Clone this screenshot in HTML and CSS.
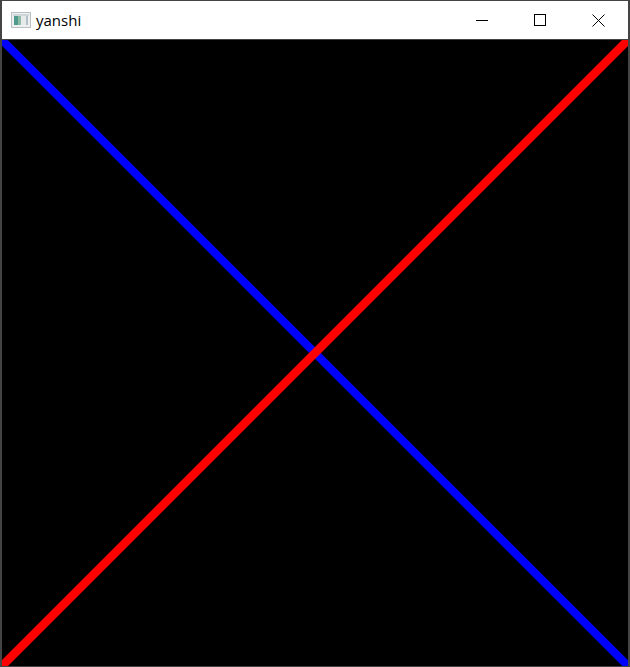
FILE: index.html
```html
<!DOCTYPE html>
<html lang="en">
<head>
    <meta charset="UTF-8">
    <title>yanshi</title>
    <link rel="stylesheet" href="styles.css">
</head>
<body>
    <div class="window">
        <!-- Title bar -->
        <header class="titlebar">
            <svg class="app-icon" width="20" height="16" viewBox="0 0 20 16">
                <rect x="0.5" y="0.5" width="19" height="15" fill="#eef0f0" stroke="#b9bfc2"/>
                <rect x="2" y="2" width="16" height="2" fill="#cfd6da"/>
                <rect x="3" y="4" width="4" height="9" fill="#4f9a8c"/>
                <rect x="7" y="4" width="3" height="9" fill="#8dbda6"/>
                <rect x="10" y="4" width="5" height="9" fill="#e6ebea"/>
                <rect x="15" y="4" width="2" height="9" fill="#b3bfca"/>
            </svg>
            <span class="title">yanshi</span>
            <div class="controls">
                <div class="control">
                    <svg width="12" height="12" viewBox="0 0 12 12"><path d="M0 6.5H12" stroke="#000" fill="none"/></svg>
                </div>
                <div class="control">
                    <svg width="12" height="12" viewBox="0 0 12 12"><rect x="0.5" y="0.5" width="11" height="11" stroke="#000" fill="none"/></svg>
                </div>
                <div class="control">
                    <svg width="13" height="13" viewBox="0 0 13 13"><path d="M0.5 0.5L12.5 12.5M12.5 0.5L0.5 12.5" stroke="#000" fill="none"/></svg>
                </div>
            </div>
        </header>

        <!-- Drawing area -->
        <main class="canvas">
            <svg class="scene" viewBox="0 0 626 626" width="626" height="626">
                <line x1="0" y1="0" x2="626" y2="626" stroke="#0000ff" stroke-width="8"/>
                <line x1="0" y1="626" x2="626" y2="0" stroke="#ff0000" stroke-width="8.5"/>
            </svg>
        </main>
    </div>
</body>
</html>
```

FILE: styles.css
```css
* {
    margin: 0;
    padding: 0;
    box-sizing: border-box;
}

body {
    width: 630px;
    height: 667px;
    overflow: hidden;
    background-color: #000;
}

.window {
    display: flex;
    flex-direction: column;
    height: 667px;
    border: 1px solid #444;
    border-left-width: 2px;
    border-right-width: 2px;
    background-color: #000;
}

.titlebar {
    display: flex;
    align-items: center;
    height: 39px;
    flex-shrink: 0;
    padding-left: 9px;
    background-color: #fff;
    border-bottom: 1px solid #444;
}

.app-icon {
    margin-right: 5px;
}

.title {
    font-family: "Open Sans", sans-serif;
    font-size: 15px;
    color: #000;
}

.controls {
    display: flex;
    margin-left: auto;
    padding-right: 1px;
}

.control {
    display: flex;
    justify-content: center;
    align-items: center;
    width: 58px;
    height: 38px;
}

.canvas {
    flex: 1;
    overflow: hidden;
}

.scene {
    display: block;
}
```
